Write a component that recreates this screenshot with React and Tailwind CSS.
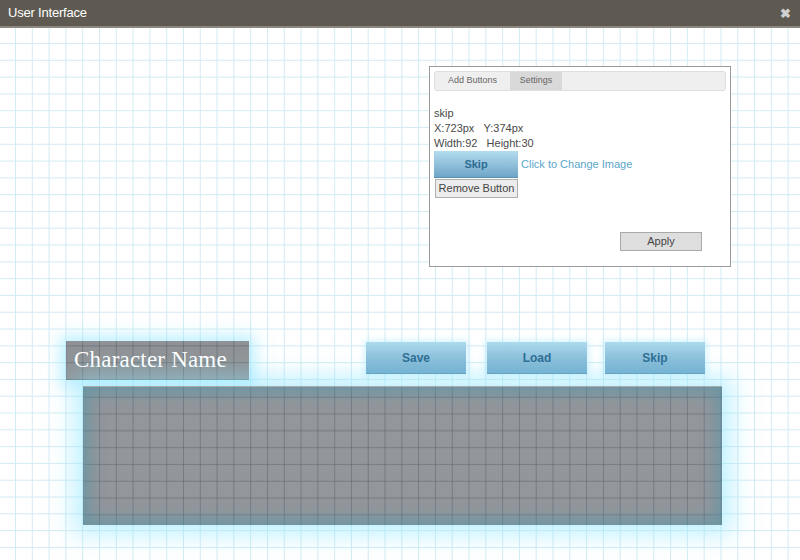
const canvasButtons = [
  { label: 'Save', left: 'left-[366px]' },
  { label: 'Load', left: 'left-[487px]' },
  { label: 'Skip', left: 'left-[605px]' },
];

function TitleBar() {
  return (
    <div className="h-[28px] bg-[#5e5a51] border-b-2 border-[#8c887f] flex items-center justify-between pl-[8px] pr-[9px]">
      <span className="text-white text-[13px] tracking-[-0.2px]">User Interface</span>
      <span className="text-[#d0d0d0] text-[13px] font-bold leading-none">✖</span>
    </div>
  );
}

function SettingsPanel() {
  return (
    <div className="absolute left-[429px] top-[38px] w-[302px] h-[201px] bg-white border border-[#9a9a9a] p-[4px]">
      <div className="flex h-[20px] bg-[#efefef] border border-[#dedede] rounded-[3px] text-[9px] text-[#666]">
        <div className="w-[75px] flex items-center justify-center">Add Buttons</div>
        <div className="w-[52px] flex items-center justify-center bg-[#d9d9d9]">Settings</div>
      </div>
      <div className="mt-[15px] text-[11px] leading-[15px] text-[#4a4a4a]">
        <div>skip</div>
        <div>X:723px&nbsp;&nbsp;&nbsp;Y:374px</div>
        <div>Width:92&nbsp;&nbsp;&nbsp;Height:30</div>
      </div>
      <div className="flex items-start gap-[3px]">
        <div className="flex flex-col">
          <div className="w-[84px] h-[27px] flex items-center justify-center bg-gradient-to-b from-[#b4dcef] to-[#6fa6c8] border-b border-[#5b8fae] text-[11px] font-bold text-[#2d6d92]">
            Skip
          </div>
          <div className="mt-[1px] ml-[1px] w-[83px] h-[19px] flex items-center justify-center bg-[#ececec] border border-[#b0b0b0] text-[11px] text-[#444]">
            Remove Button
          </div>
        </div>
        <span className="mt-[5px] text-[11px] text-[#5ba6c9]">Click to Change Image</span>
      </div>
      <div className="flex justify-end pr-[24px] mt-[34px]">
        <div className="w-[82px] h-[19px] flex items-center justify-center bg-[#dedede] border border-[#a9a9a9] text-[11px] text-[#444]">
          Apply
        </div>
      </div>
    </div>
  );
}

export default function App() {
  return (
    <div className="w-[800px] h-[560px] overflow-hidden bg-white font-['Liberation_Sans',Arial,sans-serif]">
      <TitleBar />
      <div className="relative h-[532px] bg-[linear-gradient(to_right,#d3ebf3_1px,transparent_1px),linear-gradient(to_bottom,#d3ebf3_1px,transparent_1px)] bg-size-[16.8px_16.8px] bg-position-[15px_15px]">
        <SettingsPanel />

        {/* name plate */}
        <div className="absolute left-[66px] top-[313px] w-[183px] h-[39px] bg-[#7d8084]/85 bg-[linear-gradient(to_right,rgba(60,70,80,0.3)_1px,transparent_1px),linear-gradient(to_bottom,rgba(60,70,80,0.3)_1px,transparent_1px)] bg-size-[16.8px_16.8px] bg-position-[16.2px_4.4px] shadow-[0_0_14px_6px_rgba(140,230,255,0.55)] flex items-center pl-[8px]">
          <span className="text-white text-[23px] font-['Liberation_Serif','Times_New_Roman',serif] tracking-[0.2px]">Character Name</span>
        </div>

        {canvasButtons.map((b) => (
          <div
            key={b.label}
            className={`absolute ${b.left} top-[314px] w-[100px] h-[32px] flex items-center justify-center bg-gradient-to-b from-[#addaee] to-[#70a8c9] border-b border-[#5d8fae] shadow-[0_0_6px_2px_rgba(150,230,255,0.4)] text-[12px] font-bold text-[#2b6b90]`}
          >
            {b.label}
          </div>
        ))}

        {/* dialogue box */}
        <div className="absolute left-[83px] top-[358px] w-[639px] h-[139px] bg-[#80848a]/85 bg-[linear-gradient(to_right,rgba(60,70,80,0.3)_1px,transparent_1px),linear-gradient(to_bottom,rgba(60,70,80,0.3)_1px,transparent_1px)] bg-size-[16.8px_16.8px] bg-position-[16px_9.8px] border-t border-[#a8aaac] shadow-[0_0_22px_10px_rgba(140,230,255,0.55),inset_0_0_16px_6px_rgba(80,150,170,0.6)]" />
      </div>
    </div>
  );
}
